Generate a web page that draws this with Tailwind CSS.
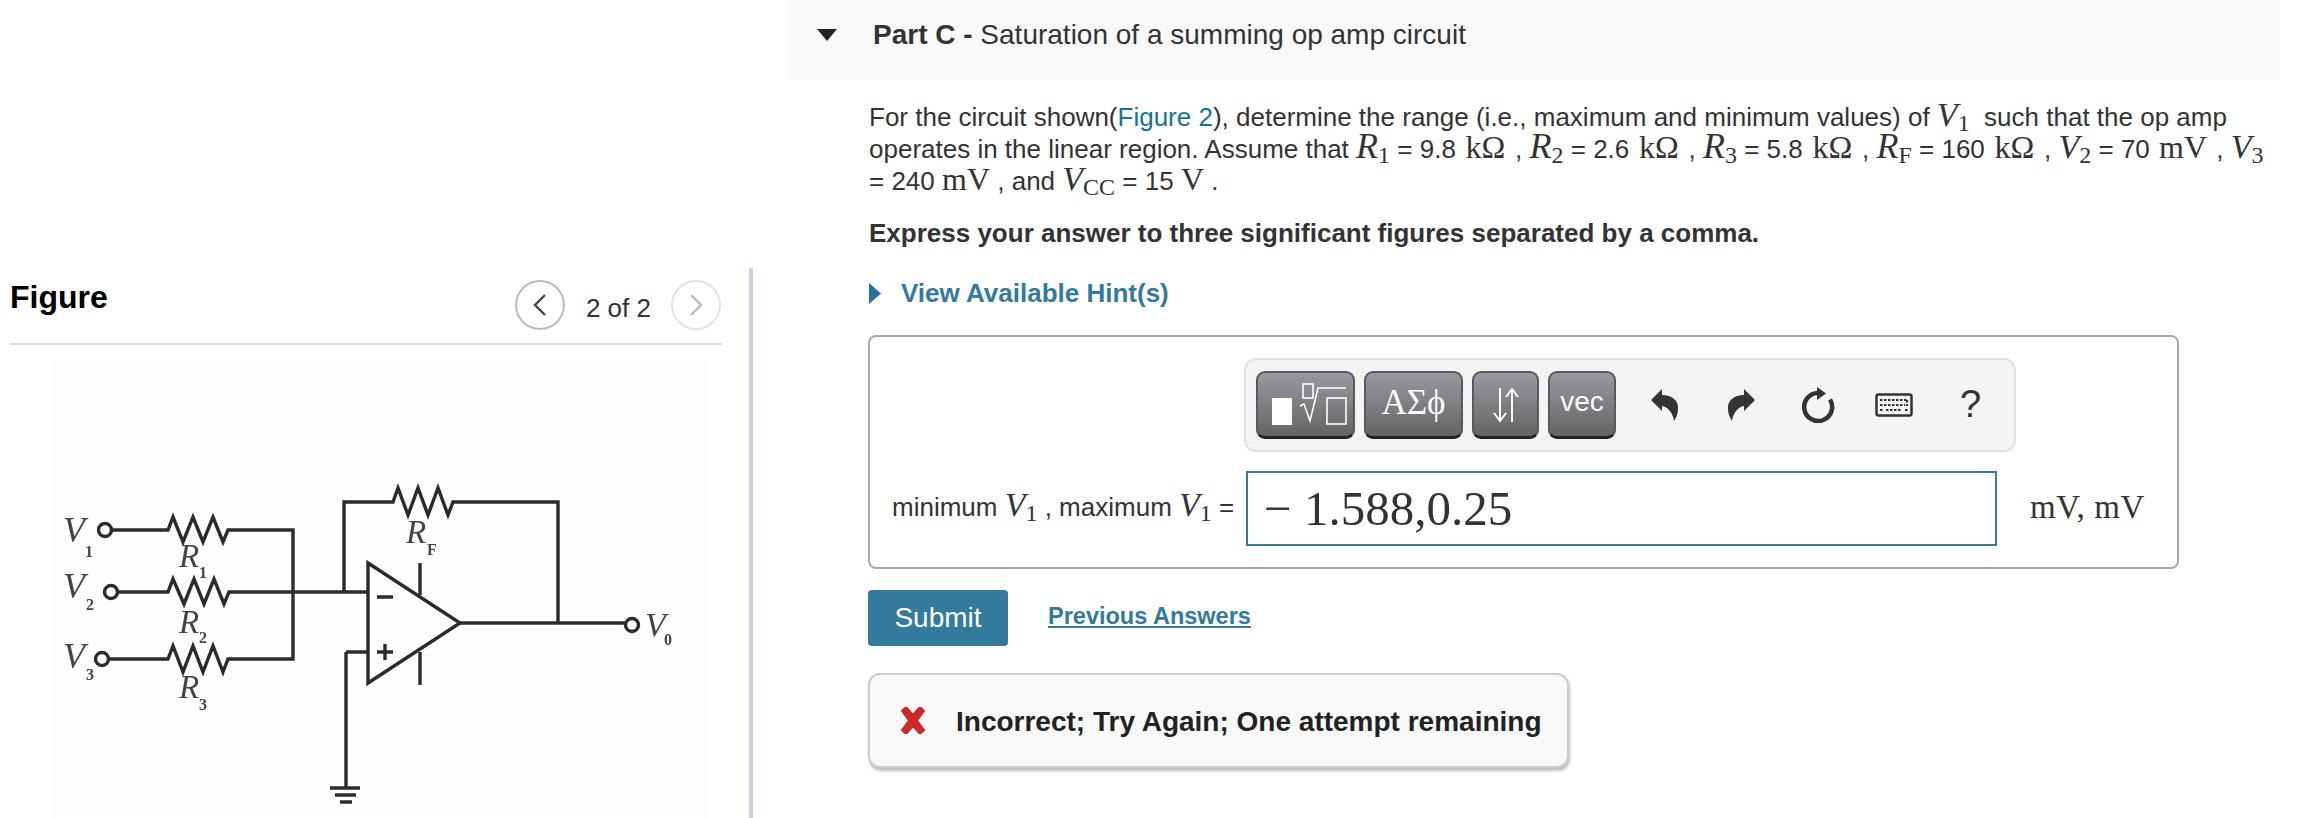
<!DOCTYPE html>
<html><head><meta charset="utf-8"><title>Part C</title>
<script src="https://cdn.jsdelivr.net/npm/@tailwindcss/browser@4"></script></head>
<body class="bg-white">
<div class="flex w-[2312px] h-[818px] overflow-hidden bg-white font-['Liberation_Sans',Arial,sans-serif] text-[#333]">
  <!-- left -->
  <div class="w-[753px] shrink-0 pt-[270px] relative">
    <div class="w-[749px] h-[548px] pl-[10px] pr-[27px]">
      <div class="flex items-start h-[75px] border-b-2 border-[#ddd]">
        <div class="text-[32px] font-bold text-black leading-[54px]">Figure</div>
        <div class="ml-auto flex items-center h-[69px] -translate-x-[1px]">
          <button class="w-[50px] h-[50px] rounded-full border-2 border-[#bbb] flex items-center justify-center"><svg width="16" height="24" viewBox="0 0 16 24" fill="none" stroke="#444" stroke-width="2.4"><path d="M13 2 L3 12 L13 22"/></svg></button>
          <span class="text-[26px] text-[#333] ml-[21px] mr-[20px] mt-[8px]">2 of 2</span>
          <button class="w-[50px] h-[50px] rounded-full border-2 border-[#e2e2e2] flex items-center justify-center"><svg width="16" height="24" viewBox="0 0 16 24" fill="none" stroke="#bbb" stroke-width="2.4"><path d="M3 2 L13 12 L3 22"/></svg></button>
        </div>
      </div>
      <svg class="mt-[-345px] ml-[-10px] blur-[0.5px]" width="749" height="818" viewBox="0 0 749 818" fill="none" stroke="#2b2b2b" stroke-width="3.4">
        <rect x="50" y="360" width="660" height="458" fill="#fefefe" stroke="none"/>
        <circle cx="105" cy="530" r="6.5"/><circle cx="111" cy="592" r="6.5"/><circle cx="102" cy="659" r="6.5"/><circle cx="632" cy="625" r="6.5"/>
        <path d="M112 530H168L173 517 183 542 193 517 203 542 213 517 223 542 228 530H293V659H228L223 672 213 646 203 672 193 646 183 672 173 646 168 659H109"/>
        <path d="M118 592H168L173 579 184 604 194 579 204 604 214 579 224 604 229 592H367"/>
        <path d="M344 592V502H393L398 488 408 515 418 488 428 515 438 488 448 515 453 502H558V623"/>
        <path d="M368 563L460 623 368 683Z" stroke-linejoin="miter"/>
        <path d="M460 623H625M420 563V595M420 652V685M377 597H393M377 652H393M385 644V660M346 652H368M346 652V788M330 788H360M335 795H356M340 802H352"/>
        <g fill="#444" stroke="none" font-family="Liberation Serif" font-style="italic">
          <text x="63" y="542" font-size="36">V</text><text x="63" y="598" font-size="36">V</text><text x="63" y="668" font-size="36">V</text>
          <text x="645" y="636" font-size="34">V</text>
          <text x="179" y="567" font-size="33">R</text><text x="179" y="633" font-size="33">R</text><text x="179" y="698" font-size="33">R</text><text x="406" y="543" font-size="33">R</text>
        </g>
        <g fill="#444" stroke="none" font-family="Liberation Serif" font-weight="bold" font-size="16" text-anchor="middle">
          <text x="89" y="557">1</text><text x="90" y="610">2</text><text x="90" y="680">3</text>
          <text x="203" y="578">1</text><text x="203" y="643">2</text><text x="203" y="710">3</text><text x="432" y="555">F</text><text x="668" y="645">0</text>
        </g>
      </svg>
    </div>
    <div class="absolute right-0 top-[268px] w-[4px] h-[550px] bg-[#c6d2e2]"></div>
  </div>
  <!-- right -->
  <div class="ml-[35px] w-[1492px] shrink-0">
    <div class="h-[80px] bg-[#f9f9f9] flex items-center pl-[29px] pb-[10px] text-[28px] text-[#333]">
      <svg class="w-[20px] h-[12px]" viewBox="0 0 20 12"><path d="M0 0H20L10 12Z" fill="#222"/></svg>
      <div class="ml-[36px]"><b>Part C -</b> Saturation of a summing op amp circuit</div>
    </div>
    <div class="pl-[81px] pt-[21px] text-[26px] leading-[32px] whitespace-nowrap text-[#333]">
      <p>For the circuit shown(<span class="text-[#1c7293]">Figure 2</span>), determine the range (i.e., maximum and minimum values) of <span class="font-['Liberation_Serif'] italic text-[34px] leading-[0]">V</span><span class="font-['Liberation_Serif'] text-[24px] leading-[0] relative top-[5px]">1</span>&nbsp; such that the op amp<br>
      operates in the linear region. Assume that <span class="font-['Liberation_Serif'] italic text-[36px] leading-[0]">R</span><span class="font-['Liberation_Serif'] text-[24px] leading-[0] relative top-[5px]">1</span> = 9.8 <span class="font-['Liberation_Serif'] text-[32px] leading-[0] px-[2.5px]">kΩ</span> , <span class="font-['Liberation_Serif'] italic text-[36px] leading-[0]">R</span><span class="font-['Liberation_Serif'] text-[24px] leading-[0] relative top-[5px]">2</span> = 2.6 <span class="font-['Liberation_Serif'] text-[32px] leading-[0] px-[2.5px]">kΩ</span> , <span class="font-['Liberation_Serif'] italic text-[36px] leading-[0]">R</span><span class="font-['Liberation_Serif'] text-[24px] leading-[0] relative top-[5px]">3</span> = 5.8 <span class="font-['Liberation_Serif'] text-[32px] leading-[0] px-[2.5px]">kΩ</span> , <span class="font-['Liberation_Serif'] italic text-[36px] leading-[0]">R</span><span class="font-['Liberation_Serif'] text-[24px] leading-[0] relative top-[5px]">F</span> = 160 <span class="font-['Liberation_Serif'] text-[32px] leading-[0] px-[2.5px]">kΩ</span> , <span class="font-['Liberation_Serif'] italic text-[34px] leading-[0]">V</span><span class="font-['Liberation_Serif'] text-[24px] leading-[0] relative top-[5px]">2</span> = 70 <span class="font-['Liberation_Serif'] text-[32px] leading-[0] px-[2px]">mV</span> , <span class="font-['Liberation_Serif'] italic text-[34px] leading-[0]">V</span><span class="font-['Liberation_Serif'] text-[24px] leading-[0] relative top-[5px]">3</span><br>
      = 240 <span class="font-['Liberation_Serif'] text-[32px] leading-[0]">mV</span> , and <span class="font-['Liberation_Serif'] italic text-[34px] leading-[0]">V</span><span class="font-['Liberation_Serif'] text-[24px] leading-[0] relative top-[5px]">CC</span> = 15 <span class="font-['Liberation_Serif'] text-[32px] leading-[0]">V</span> .</p>
      <p class="mt-[20px] font-bold">Express your answer to three significant figures separated by a comma.</p>
      <div class="mt-[28px] flex items-center font-bold text-[#337a9c]">
        <svg class="w-[12px] h-[21px]" viewBox="0 0 12 21"><path d="M0 0L12 10.500 0 21Z" fill="#27719a"/></svg>
        <span class="ml-[20px]">View Available Hint(s)</span>
      </div>
    </div>
    <div class="ml-[80px] mt-[26px] w-[1311px] h-[234px] border-2 border-[#aaa] rounded-[8px]">
      <div class="ml-[374px] mt-[21px] w-[772px] h-[94px] bg-[#f4f4f4] border-2 border-[#e2e2e2] rounded-[12px] flex items-center pl-[10px] text-white">
        <button class="w-[99px] h-[68px] rounded-[9px] border-2 border-[#5a5a5a] border-b-[3px] border-b-[#222] bg-gradient-to-b from-[#9a99a3] to-[#646464] shrink-0">
          <svg class="-m-[2px]" width="99" height="68" viewBox="0 0 99 68" fill="none" stroke="#fff" stroke-width="1.6"><rect x="16" y="27" width="20" height="27" fill="#fff" stroke="none"/><rect x="47" y="13" width="10" height="14"/><path d="M44 35L48 33 54 50 62 17H90"/><rect x="71" y="27" width="19" height="26"/></svg>
        </button>
        <button class="ml-[9px] w-[99px] h-[68px] pb-[5px] rounded-[9px] border-2 border-[#5a5a5a] border-b-[3px] border-b-[#222] bg-gradient-to-b from-[#9a99a3] to-[#646464] shrink-0 font-['Liberation_Serif'] text-[35px] leading-none">ΑΣϕ</button>
        <button class="ml-[9px] w-[67px] h-[68px] rounded-[9px] border-2 border-[#5a5a5a] border-b-[3px] border-b-[#222] bg-gradient-to-b from-[#9a99a3] to-[#646464] shrink-0 flex items-center justify-center">
          <svg width="28" height="34" viewBox="0 0 28 34" fill="none" stroke="#fff" stroke-width="2"><path d="M8 0V32M2 25L8 33 14 25M20 34V2M14 9L20 1 26 9"/></svg>
        </button>
        <button class="ml-[9px] w-[68px] h-[68px] pb-[5px] rounded-[9px] border-2 border-[#5a5a5a] border-b-[3px] border-b-[#222] bg-gradient-to-b from-[#9a99a3] to-[#646464] shrink-0 text-[28px] leading-none">vec</button>
        <svg class="ml-[35px]" width="28" height="32" viewBox="0 0 28 32"><path d="M0 11L11 0V6C21 6 28 12 27 20 27 25 25 29 23 32 22 24 17 18 11 17V22Z" fill="#333"/></svg>
        <svg class="ml-[48px]" width="28" height="32" viewBox="0 0 28 32"><path d="M28 11L17 0V6C7 6 0 12 1 20 1 25 3 29 5 32 6 24 11 18 17 17V22Z" fill="#333"/></svg>
        <svg class="ml-[46px]" width="34" height="36" viewBox="0 0 34 36" fill="none"><path d="M17 6A14 14 0 1 0 29 12.500" stroke="#333" stroke-width="4.500"/><path d="M16 0L25 6.500 16 13Z" fill="#333"/></svg>
        <svg class="ml-[40px]" width="38" height="24" viewBox="0 0 38 24"><rect x="1.500" y="1.500" width="35" height="21" rx="2" fill="#f4f4f4" stroke="#333" stroke-width="2.500"/><path d="M5 7H32M5 12H30M5 17H8M11 17H27M30 17H33M32 7V13" stroke="#333" stroke-width="2.200" stroke-dasharray="2.500 1.500" fill="none"/></svg>
        <span class="ml-[47px] mb-[3px] text-[38px] text-[#333] leading-none">?</span>
      </div>
      <div class="mt-[19px] flex items-center pl-[22px] h-[75px] text-[26px]">
        <span class="whitespace-nowrap mb-[2px]">minimum <span class="font-['Liberation_Serif'] italic text-[34px] leading-[0]">V</span><span class="font-['Liberation_Serif'] text-[24px] leading-[0] relative top-[5px]">1</span> , maximum <span class="font-['Liberation_Serif'] italic text-[34px] leading-[0]">V</span><span class="font-['Liberation_Serif'] text-[24px] leading-[0] relative top-[5px]">1</span> =</span>
        <div class="absolute left-[1246px] w-[751px] h-[75px] border-2 border-[#337a9c] flex items-center pl-[16px] font-['Liberation_Serif'] text-[49px] text-[#333] whitespace-pre">− 1.588,0.25</div>
        <span class="absolute left-[2030px] mb-[2px] font-['Liberation_Serif'] text-[33px] tracking-[0.6px]">mV, mV</span>
      </div>
    </div>
    <div class="ml-[80px] mt-[21px] flex items-start">
      <button class="w-[140px] h-[56px] rounded-[4px] bg-[#337a9c] text-white text-[28px]">Submit</button>
      <a class="ml-[40px] mt-[9px] text-[23.5px] font-bold text-[#337a9c] underline">Previous Answers</a>
    </div>
    <div class="ml-[80px] mt-[27px] w-[701px] h-[95px] bg-[#f9f9f9] border-2 border-[#ccc] rounded-[12px] shadow-[1px_3px_3px_rgba(0,0,0,0.25)] flex items-center pl-[29px]">
      <svg width="28" height="27" viewBox="0 0 28 27"><path d="M3 4L7 0 14 8 21 0 25 4 18 13.500 25 23 21 27 14 19 7 27 3 23 10 13.500Z" stroke="#cc2929" stroke-width="2" stroke-linejoin="round" fill="#cc2929"/></svg>
      <span class="ml-[29px] mt-[2px] text-[28px] font-bold text-[#222] whitespace-nowrap">Incorrect; Try Again; One attempt remaining</span>
    </div>
  </div>
</div>
</body></html>
